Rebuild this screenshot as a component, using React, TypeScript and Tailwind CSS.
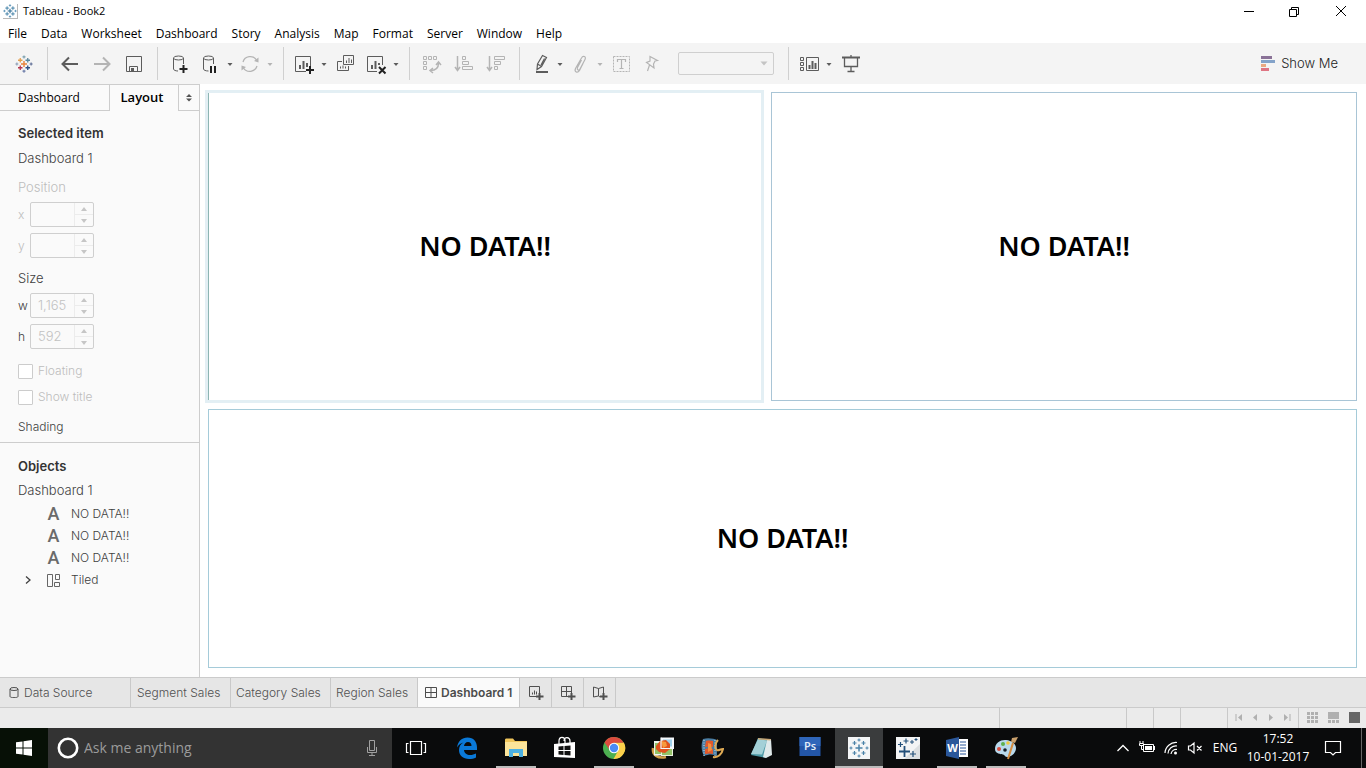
import React from 'react';
import { clsx } from 'clsx';

type IconProps = { children: React.ReactNode; size?: number; className?: string };

function Icon({ children, size = 22, className }: IconProps) {
  return (
    <svg
      width={size}
      height={size}
      viewBox={`0 0 ${size} ${size}`}
      fill="none"
      stroke="currentColor"
      className={clsx('block shrink-0', className)}
      aria-hidden="true"
    >
      {children}
    </svg>
  );
}

interface MarkProps {
  size: number;
  center: string;
  corners: string[];
  sides: string[];
}

// x, y of each small cross around the center one
const cornerSpots = [[7, 7], [17, 7], [7, 17], [17, 17]];
const sideSpots = [[12, 2.5], [21.5, 12], [12, 21.5], [2.5, 12]];

function TableauMark({ size, center, corners, sides }: MarkProps) {
  return (
    <svg width={size} height={size} viewBox="0 0 24 24" fill="none" className="block shrink-0" aria-hidden="true">
      <path d="M12 8v8M8 12h8" stroke={center} strokeWidth="1.9" />
      {cornerSpots.map(([x, y], i) => (
        <path key={i} d={`M${x} ${y - 3}v6M${x - 3} ${y}h6`} stroke={corners[i]} strokeWidth="1.7" />
      ))}
      {sideSpots.map(([x, y], i) => (
        <path key={i} d={`M${x} ${y - 2}v4M${x - 2} ${y}h4`} stroke={sides[i]} strokeWidth="1.5" />
      ))}
    </svg>
  );
}

const blues = ['#4583a8', '#4583a8', '#4583a8', '#4583a8'];
const paleBlues = ['#5e95b8', '#5e95b8', '#5e95b8', '#5e95b8'];

const menus = ['File', 'Data', 'Worksheet', 'Dashboard', 'Story', 'Analysis', 'Map', 'Format', 'Server', 'Window', 'Help'];

function TitleBar() {
  return (
    <header className="flex h-[23px] items-center bg-white pl-[3px] font-['Open_Sans',sans-serif] text-black">
      <span className="border-r border-b border-[#b8b8b8]">
        <TableauMark size={14} center="#2f6f98" corners={blues} sides={paleBlues} />
      </span>
      <h1 className="ml-[5px] text-[11px]">Tableau - Book2</h1>
      <div className="ml-auto flex items-center">
        <button aria-label="Minimize" className="flex w-[46px] justify-center">
          <Icon size={12}><path d="M1 5.500h10" /></Icon>
        </button>
        <button aria-label="Restore" className="flex w-[46px] justify-center">
          <Icon size={12}><path d="M.5 3.500h7v7h-7zM2.500 3.500v-2h7v7h-2" /></Icon>
        </button>
        <button aria-label="Close" className="mr-0.5 flex w-[46px] justify-center">
          <Icon size={12}><path d="M1 0l10 10M11 0L1 10" /></Icon>
        </button>
      </div>
    </header>
  );
}

function MenuBar() {
  return (
    <nav className="flex h-5 items-center gap-3.5 bg-white pt-px pl-2 font-['Open_Sans',sans-serif] text-xs text-black">
      {menus.map((menu) => (
        <button key={menu}>{menu}</button>
      ))}
    </nav>
  );
}

interface ToolProps {
  label: string;
  wide?: boolean;
  dim?: boolean;
  children: React.ReactNode;
}

function Tool({ label, wide, dim, children }: ToolProps) {
  return (
    <button
      aria-label={label}
      disabled={dim}
      className={clsx('flex h-8 shrink-0 items-center justify-center', wide ? 'w-8' : 'w-7', dim ? 'text-[#b4b4b4]' : 'text-[#5c5c5c]')}
    >
      <Icon>{children}</Icon>
    </button>
  );
}

function Caret({ label, dim }: { label: string; dim?: boolean }) {
  return (
    <button aria-label={label} disabled={dim} className={clsx('flex h-8 w-3 shrink-0 items-center justify-center', dim ? 'text-[#b4b4b4]' : 'text-[#5c5c5c]')}>
      <Icon size={6}><path d="M.5 2h5L3 5z" fill="currentColor" stroke="none" /></Icon>
    </button>
  );
}

function ToolGroup({ children }: { children: React.ReactNode }) {
  return <div className="my-1 flex items-center border-l border-[#d0d0d0] pr-[7px] pl-1.5">{children}</div>;
}

function Toolbar() {
  return (
    <div className="flex h-[41px] items-stretch bg-[#f4f4f4]">
      <button aria-label="Start page" className="flex w-[47px] items-center justify-center">
        <TableauMark
          size={18}
          center="#e8833a"
          corners={['#e3a04f', '#5b879c', '#b5364e', '#2c4d80']}
          sides={['#7ba0ae', '#5d6d95', '#6c7ca8', '#8c9db5']}
        />
      </button>
      <ToolGroup>
        <Tool label="Undo" wide>
          <path d="M3.500 11H19M10 4.500L3.500 11l6.500 6.500" strokeWidth="2" />
        </Tool>
        <Tool label="Redo" wide dim>
          <path d="M3 11h15.500M12 4.500l6.500 6.500-6.500 6.500" strokeWidth="2" />
        </Tool>
        <Tool label="Save" wide>
          <path d="M3.500 3.500h15v15h-15zM6.500 18.500v-5h8v5" />
          <path d="M8 15h3v3.500H8z" fill="currentColor" stroke="none" />
        </Tool>
      </ToolGroup>
      <ToolGroup>
        <Tool label="New data source" wide>
          <ellipse cx="9.500" cy="5" rx="5" ry="2" />
          <path d="M4.500 5v11c0 1 2 2 4.500 2M14.500 5v6" />
          <path d="M14.500 12v8M10.500 16h8" stroke="#222" strokeWidth="2" />
        </Tool>
        <Tool label="Pause auto updates">
          <ellipse cx="9.500" cy="5" rx="5" ry="2" />
          <path d="M4.500 5v11c0 1 2 2 5 2M14.500 5v6" />
          <path d="M12 13v7M16 13v7" stroke="#222" strokeWidth="2" />
        </Tool>
        <Caret label="Auto update options" />
        <Tool label="Run update" dim>
          <path d="M4 9a7.500 7.500 0 0 1 13.500-2M18 13a7.500 7.500 0 0 1-13.500 2" strokeWidth="1.300" />
          <path d="M19.500 4.500v5l-4.500-1.500zM2.500 17.500v-5l4.500 1.500z" fill="currentColor" stroke="none" />
        </Tool>
        <Caret label="Update options" dim />
      </ToolGroup>
      <ToolGroup>
        <Tool label="New worksheet">
          <path d="M13 18.500H2.500v-15h15V13" />
          <path d="M7 16v-4M10.500 16V8M14 14v-4" strokeWidth="2" />
          <path d="M17 13v8M13 17h8" stroke="#222" strokeWidth="2" />
        </Tool>
        <Caret label="New sheet options" />
        <Tool label="Duplicate" wide>
          <path d="M8.500 2.500h10v9h-10zM7 8.500H2.500v9h11V13" />
          <path d="M11.500 10V7.500M14 10V5M16.500 10V6.500M5.500 15.500v-2M8 15.500v-3M10.500 15.500v-2" />
        </Tool>
        <Tool label="Clear sheet">
          <path d="M12 18.500H2.500v-15h15V12" />
          <path d="M7 16v-4M10.500 16V8M14 12v-2" strokeWidth="2" />
          <path d="M14 14l6.500 6.500M20.500 14L14 20.500" stroke="#222" strokeWidth="2" />
        </Tool>
        <Caret label="Clear options" />
      </ToolGroup>
      <ToolGroup>
        <Tool label="Swap rows and columns" wide dim>
          <path d="M2.500 3.500h3v3h-3zM7.500 3.500h3v3h-3zM12.500 3.500h3v3h-3zM2.500 8.500h3v3h-3zM2.500 13.500h3v3h-3z" />
          <path d="M17.500 10c0 5-3 7.500-8 7.500M15 12l2.500-3 2.500 3M12 15l-3 2.500 3 2.500" strokeWidth="1.500" />
        </Tool>
        <Tool label="Sort ascending" wide dim>
          <path d="M4.500 3v14M2 14l2.500 3.500L7 14" strokeWidth="1.500" />
          <path d="M9.500 3.500h3v3h-3zM9.500 8.500h6v3h-6zM9.500 13.500h10v3h-10z" />
        </Tool>
        <Tool label="Sort descending" wide dim>
          <path d="M4.500 3v14M2 14l2.500 3.500L7 14" strokeWidth="1.500" />
          <path d="M9.500 3.500h10v3h-10zM9.500 8.500h6v3h-6zM9.500 13.500h3v3h-3z" />
        </Tool>
      </ToolGroup>
      <ToolGroup>
        <Tool label="Highlight">
          <path d="M8.500 11L13.500 2.500l4 2-5 9-4.500 3zM8.500 11l4 2.500M12 12l3.500-6.500" strokeWidth="1.200" />
          <path d="M7 19h12" strokeWidth="2" />
        </Tool>
        <Caret label="Highlight options" />
        <Tool label="Group" dim>
          <path d="M12.500 7l-4 7.500c-1 2.500 1.500 3.500 2.500 1.500l5-9.500c1.500-3-2-4.500-3.500-1.500l-6 10.500c-1.500 3.500 2 5 4 2l3.500-7" strokeWidth="1.200" />
        </Tool>
        <Caret label="Group options" dim />
        <Tool label="Show mark labels" wide dim>
          <path d="M2.500 3.500h16v15h-16z" strokeDasharray="2 1" />
          <path d="M6.500 9V6.500h8V9M10.500 6.500v9M8.500 15.500h4" strokeWidth="1.200" />
        </Tool>
        <Tool label="Fix axes" dim>
          <path d="M9 3.500l7.500 4-2.500.5-1.500 3 .5 4-7.500-5.500 3.500-1.500zM8.500 12L6.500 18" strokeWidth="1.200" />
        </Tool>
        <span className="relative ml-3 block h-[23px] w-24">
          <select disabled aria-label="Fit" className="block h-full w-full appearance-none rounded-[2px] border border-[#cfcfcf] bg-[#f4f4f4]" />
          <span className="pointer-events-none absolute top-2 right-1.5 text-[#c4c4c4]">
            <Icon size={8}><path d="M.5 1.500h7L4 5.500z" fill="currentColor" stroke="none" /></Icon>
          </span>
        </span>
        <span className="w-[7px]" />
      </ToolGroup>
      <ToolGroup>
        <Tool label="Show or hide cards">
          <path d="M2.500 4.500h3v3h-3zM2.500 9.500h3v3h-3zM2.500 14.500h3v3h-3zM8.500 4.500h12v13h-12z" />
          <path d="M11.500 16v-4M14.500 16V8M17.500 16v-6" strokeWidth="2" />
        </Tool>
        <Caret label="Card options" />
        <Tool label="Presentation mode" wide>
          <path d="M2 4.500h18" strokeWidth="2" />
          <path d="M4.500 5v8.500h13V5M11 2v2M11 13.500v5M7.500 18.500h7" strokeWidth="1.300" />
        </Tool>
      </ToolGroup>
      <button className="mr-7 ml-auto flex items-center gap-1.5 font-['Inter',sans-serif] text-[13px] font-light text-[#222]">
        <svg width="14" height="16" viewBox="0 0 14 16" className="block" aria-hidden="true">
          <path d="M0 0h11v3H0z" fill="#8a7297" />
          <path d="M0 4h14v3H0z" fill="#84a3c9" />
          <path d="M0 8h5v3H0z" fill="#eaa982" />
          <path d="M0 12h8v3H0z" fill="#df7583" />
        </svg>
        Show Me
      </button>
    </div>
  );
}

function Spinner({ id, label, value, dim }: { id: string; label: string; value: string; dim?: boolean }) {
  return (
    <div className="flex h-[25px] items-center">
      <label htmlFor={id} className={clsx('w-3 shrink-0 text-xs', dim && 'text-[#bdbdbd]')}>{label}</label>
      <div className="flex h-full w-16 rounded-[2px] border border-[#cfcfcf]">
        <input id={id} defaultValue={value} disabled className="w-11 min-w-0 border-r border-[#ececec] bg-transparent pl-[7px] text-[#c2c2c2]" />
        <div className="flex flex-1 flex-col text-[#c6c6c6]">
          <button disabled aria-label={`Increase ${label}`} className="flex flex-1 items-center justify-center border-b border-[#ececec]">
            <Icon size={6}><path d="M0 5h6L3 1z" fill="currentColor" stroke="none" /></Icon>
          </button>
          <button disabled aria-label={`Decrease ${label}`} className="flex flex-1 items-center justify-center">
            <Icon size={6}><path d="M0 1h6L3 5z" fill="currentColor" stroke="none" /></Icon>
          </button>
        </div>
      </div>
    </div>
  );
}

function CheckRow({ label }: { label: string }) {
  return (
    <label className="flex h-[26px] items-center gap-[5px] text-[#bdbdbd]">
      <input type="checkbox" disabled className="size-[15px] appearance-none rounded-[1px] border border-[#cccccc] bg-white" />
      {label}
    </label>
  );
}

function SidePanel() {
  return (
    <aside className="flex w-[200px] shrink-0 flex-col border-t border-r border-[#cdcdcd] bg-[#fafafa] font-['Inter',sans-serif] text-[13px] font-light text-[#404040]">
      <div className="flex h-[26px] font-['Open_Sans',sans-serif] text-black">
        <button className="w-[110px] border-r border-b border-[#cdcdcd] pl-[18px] text-left text-xs font-normal">Dashboard</button>
        <button className="flex-1 pr-1 text-center font-semibold">Layout</button>
        <button aria-label="Panel menu" className="flex w-[21px] items-center justify-center border-b border-l border-[#cdcdcd] text-[#555]">
          <Icon size={8}><path d="M1 3h6L4 0zM1 4.500h6l-3 3z" fill="currentColor" stroke="none" /></Icon>
        </button>
      </div>

      <section className="border-b border-[#cdcdcd] pt-[9px] pl-[18px]">
        <h2 className="flex h-[27px] items-center font-semibold text-[#333]">Selected item</h2>
        <p className="flex h-6 items-center">Dashboard 1</p>
        <h3 className="flex h-[31px] items-center pt-0.5 text-[#bdbdbd]">Position</h3>
        <div className="flex flex-col gap-1.5">
          <Spinner id="pos-x" label="x" value="" dim />
          <Spinner id="pos-y" label="y" value="" dim />
        </div>
        <h3 className="mt-1.5 flex h-[29px] items-center">Size</h3>
        <div className="flex flex-col gap-1.5">
          <Spinner id="size-w" label="w" value="1,165" />
          <Spinner id="size-h" label="h" value="592" />
        </div>
        <div className="mt-[9px] text-xs">
          <CheckRow label="Floating" />
          <CheckRow label="Show title" />
        </div>
        <h3 className="flex h-8 items-center pt-0.5 text-xs">Shading</h3>
      </section>

      <section className="pt-3">
        <h2 className="flex h-6 items-center pl-[18px] font-semibold text-[#333]">Objects</h2>
        <p className="flex h-6 items-center pl-[18px]">Dashboard 1</p>
        <ul className="text-xs">
          {[1, 2, 3].map((n) => (
            <li key={n} className="flex h-[22px] items-center pl-[46px]">
              <span className="w-[15px] text-center font-['Roboto',sans-serif] text-lg font-medium text-[#6a6a6a]">A</span>
              <span className="ml-2.5">NO DATA!!</span>
            </li>
          ))}
          <li className="flex h-[22px] items-center pl-6">
            <button aria-label="Expand Tiled">
              <Icon size={8}><path d="M2 .5L6 4 2 7.500" strokeWidth="1.300" /></Icon>
            </button>
            <Icon size={14} className="ml-[15px] text-[#666]">
              <path d="M.5 1.500h5v12h-5zM8.500 1.500h4v5h-4zM7.500 9.500h5v4h-5z" />
            </Icon>
            <span className="ml-2.5">Tiled</span>
          </li>
        </ul>
      </section>
    </aside>
  );
}

function Zone({ className }: { className: string }) {
  return (
    <div className={clsx("flex items-center justify-center font-['Noto_Sans',sans-serif] text-[27px] font-semibold text-black", className)}>
      NO DATA!!
    </div>
  );
}

function DashboardCanvas() {
  return (
    <main className="grid min-w-0 flex-1 grid-cols-[553fr_586fr] grid-rows-[309fr_259fr] gap-x-2.5 gap-y-2 bg-white pt-2 pr-[9px] pb-[9px] pl-2">
      <Zone className="my-px border-l border-[#8db5b3] ring-3 ring-[#e3eff4]" />
      <Zone className="border border-[#a9c5d6]" />
      <Zone className="col-span-2 border border-[#a5cbd9]" />
    </main>
  );
}

function SheetTabs() {
  const tab = 'flex items-center border-r border-[#c9c9c9]';
  return (
    <div className="flex h-[31px] border-y border-[#cbcbcb] bg-[#e6e6e6] font-['Inter',sans-serif] text-xs font-light text-[#505050]">
      <button className={clsx(tab, 'w-[131px] gap-[5px] pl-2')}>
        <Icon size={11}>
          <ellipse cx="6" cy="2" rx="4" ry="1.500" />
          <path d="M2 2v7.500c0 1.500 8 1.500 8 0V2" />
        </Icon>
        Data Source
      </button>
      <button className={clsx(tab, 'w-[100px] pl-1.5')}>Segment Sales</button>
      <button className={clsx(tab, 'w-[100px] pl-[5px]')}>Category Sales</button>
      <button className={clsx(tab, 'w-[87px] pl-[5px]')}>Region Sales</button>
      <button className={clsx(tab, 'w-[102px] gap-1 bg-[#fafafa] pl-[7px] font-semibold whitespace-nowrap text-[#4c4c4c]')}>
        <Icon size={12}><path d="M.5.500h11v10H.5zM6 .5v10M.5 5.500h11" /></Icon>
        Dashboard 1
      </button>
      <button aria-label="New worksheet" className={clsx(tab, 'w-8 justify-center')}>
        <Icon size={16}>
          <path d="M9 11.500H1.500v-10h10V8M4.500 9.500v-2M6.500 9.500v-4M8.500 9.500v-3" />
          <path d="M11.500 8v7M8 11.500h7.500" strokeWidth="2" />
        </Icon>
      </button>
      <button aria-label="New dashboard" className={clsx(tab, 'w-8 justify-center')}>
        <Icon size={16}>
          <path d="M8 11.500H1.500v-10h10V8M6.500 1.500v10M1.500 6.500h10" />
          <path d="M11.500 8v7M8 11.500h7.500" strokeWidth="2" />
        </Icon>
      </button>
      <button aria-label="New story" className={clsx(tab, 'w-8 justify-center')}>
        <Icon size={16}>
          <path d="M8 12l-1.500-1-5 1V2l5 1.500L11.500 2v6M6.500 3.500V11" />
          <path d="M11.500 8v7M8 11.500h7.500" strokeWidth="2" />
        </Icon>
      </button>
    </div>
  );
}

const pagers = [
  { label: 'First sheet', d: 'M1.500 0v7h-1V0zM7 0v7L3 3.500z' },
  { label: 'Previous sheet', d: 'M6 0v7L2 3.500z' },
  { label: 'Next sheet', d: 'M2 0v7l4-3.500z' },
  { label: 'Last sheet', d: 'M1 0v7l4-3.500zM6.500 0v7h1V0z' },
];

function StatusBar() {
  return (
    <div className="flex h-5 justify-end bg-[#ebebeb] text-[#b0b0b0]">
      <span className="w-[127px] border-l border-[#c9c9c9]" />
      <span className="w-[27px] border-l border-[#c9c9c9]" />
      <span className="w-[27px] border-l border-[#c9c9c9]" />
      <span className="w-[47px] border-l border-[#c9c9c9]" />
      <div className="flex w-[71px] items-center gap-2 border-l border-[#c9c9c9] pb-px pl-[7px]">
        {pagers.map((p) => (
          <button key={p.label} aria-label={p.label} disabled>
            <Icon size={8}><path d={p.d} fill="currentColor" stroke="none" /></Icon>
          </button>
        ))}
      </div>
      <div className="flex w-[68px] items-center gap-2.5 border-l border-[#c9c9c9] pb-px pl-2">
        <button aria-label="Show sheet sorter">
          <Icon size={11}><path d="M0 1.500h11M0 5.500h11M0 9.500h11" strokeWidth="3" strokeDasharray="3 1" /></Icon>
        </button>
        <button aria-label="Show filmstrip">
          <Icon size={11}>
            <path d="M0 3.500h11" strokeWidth="7" />
            <path d="M0 9.500h11" strokeWidth="3" strokeDasharray="3 1" />
          </Icon>
        </button>
        <button aria-label="Show tabs" className="text-[#666]">
          <Icon size={11}><path d="M0 0h11v11H0z" fill="currentColor" stroke="none" /></Icon>
        </button>
      </div>
    </div>
  );
}

interface TaskAppProps {
  label: string;
  open?: boolean;
  active?: boolean;
  children: React.ReactNode;
}

function TaskApp({ label, open, active, children }: TaskAppProps) {
  return (
    <button aria-label={label} className={clsx('flex w-12 shrink-0 flex-col items-center', active && 'bg-[#3a3c3d]')}>
      <span className="flex flex-1 items-center">
        <svg width="24" height="24" viewBox="0 0 24 24" className="block" aria-hidden="true">{children}</svg>
      </span>
      <span className={clsx('-mt-0.5 h-0.5', active ? 'w-full' : 'w-10', open && 'bg-[#bcbcbc]')} />
    </button>
  );
}

function TaskApps() {
  return (
    <div className="ml-[3px] flex gap-px">
      <TaskApp label="Microsoft Edge">
        <path d="M2 11.500C3 5 7 1.500 12.500 1.500c6 0 9.500 4 9.500 10V14H9c.3 3.500 3 5 6 5 2.300 0 4.300-.6 6-1.500v4c-2 1-4.300 1.500-7 1.500-6 0-10-3.500-10-9 0-3.200 1.600-6 4.500-7.500C5.500 7 3.500 9 2 11.500zM9 10h7.500c0-2.500-1.300-4-3.500-4S9.300 7.700 9 10z" fill="#0a79d8" />
      </TaskApp>
      <TaskApp label="File Explorer" open>
        <path d="M1 4c0-1 .5-1.500 1.500-1.500H9L11 5h12v15H1z" fill="#f0c65c" />
        <path d="M1 6h22v14H1z" fill="#fbe49a" />
        <path d="M5 21v-8h14v8h-4v-4H9v4z" fill="#4db1e2" />
      </TaskApp>
      <TaskApp label="Store">
        <path d="M1 8l21-2v16l-21-1z" fill="#fff" />
        <path d="M6 8V5c0-5 6-4.500 6-.5V7M11 5c0-5 6-4 6 0v2" fill="none" stroke="#fff" strokeWidth="1.200" />
        <path d="M5.500 10.500l5-.5v4h-5zM11.500 10l6-.6V14h-6zM5.500 15h5v4l-5-.5zM11.500 15h6v4.500l-6-.4z" fill="#111" />
      </TaskApp>
      <TaskApp label="Google Chrome" open>
        <circle cx="12" cy="12" r="11" fill="#4caf50" />
        <path d="M12 6.500h9.800A11 11 0 0 1 11.500 23l5-9z" fill="#fcd04b" />
        <path d="M2.500 6.500A11 11 0 0 1 21.600 6.800H12v2L7 13z" fill="#dd4b3e" />
        <circle cx="12" cy="12" r="5.200" fill="#fff" />
        <circle cx="12" cy="12" r="4.200" fill="#4a8af4" />
      </TaskApp>
      <TaskApp label="Photo Gallery">
        <path d="M2 12c-1 7 5 11 13 9" fill="none" stroke="#d3a04a" strokeWidth="2.500" />
        <path d="M3 5h10v14H3z" fill="#eef5ea" />
        <path d="M4 7h9v11H4z" fill="#93c268" />
        <path d="M10 12h12v8H10z" fill="#e9f1df" />
        <path d="M11 12h10v7H11z" fill="#93c268" />
        <path d="M10 1.500h13v11H10z" fill="#f4f8fc" />
        <path d="M12 3.500h9v7h-9z" fill="#9ed0ec" />
        <path d="M5 10l4-5 6-1 4 4v5l-5 4-6-1-3-3z" fill="#e0521e" />
        <path d="M10 5l5 1 1 4-4 2z" fill="#f79a3d" />
        <path d="M10 1.500v11h13M3 19h7" fill="none" stroke="#f4f8fc" strokeWidth="1.200" />
      </TaskApp>
      <TaskApp label="Movie Maker">
        <path d="M3 3c6-1.500 11 0 14 1v16c-4-2-8-2-13 0-3-6-3-12-1-17z" fill="#4b7da3" />
        <path d="M6 5c3-.8 5-.5 7 0v6c-3-.5-5-.5-8 0zM5 13c3-.6 5-.5 8 0v5c-3-.8-5-.6-8 0z" fill="#e2592b" />
        <path d="M8 7l3 1 1 6-4 2z" fill="#f6913c" />
        <path d="M4 4v16M15 4v16" stroke="#cfe0ea" strokeWidth="1" strokeDasharray="1 1.500" />
        <path d="M18 4c-4 4-3 9-1 10 2 .8 3-1 6-1-1 5-5 9-10 8" fill="none" stroke="#e0ab55" strokeWidth="2" />
      </TaskApp>
      <TaskApp label="Notepad">
        <path d="M9 2l12 2-4 18-15-3z" fill="#4c98a6" />
        <path d="M9 3l9 1.500-5 14L2 18z" fill="#a3d0d7" />
        <path d="M18 4l4-1 1 16-6 3-3-1z" fill="#dfe9ea" />
        <path d="M9 2l13 1-.5 1.500L9 3.500z" fill="#c9a877" />
      </TaskApp>
      <TaskApp label="Photoshop">
        <path d="M1.500 1h21v19h-21z" fill="#2356a8" />
        <path d="M1.500 1h21v9h-21z" fill="#2f66ba" />
        <text x="12" y="14" textAnchor="middle" fontSize="11" fontWeight="600" fontFamily="Open Sans, sans-serif" fill="#e6f0fb">Ps</text>
      </TaskApp>
      <TaskApp label="Tableau" active open>
        <path d="M1 1h22v22H1z" fill="#f4f6f7" />
        <g fill="none" stroke="#4a82a8">
          <path d="M12 8.500v7M8.500 12h7" strokeWidth="1.500" />
          <path d="M7.500 5v4M5.500 7h4M16.500 5v4M14.500 7h4M7.500 15v4M5.500 17h4M16.500 15v4M14.500 17h4" strokeWidth="1.200" />
          <path d="M12 2.500v3M10.500 4h3M12 18.500v3M10.500 20h3M4 10.500v3M2.500 12h3M20 10.500v3M18.500 12h3" />
        </g>
      </TaskApp>
      <TaskApp label="Tableau Reader">
        <path d="M0 1h24v22H0z" fill="#f3f4f5" />
        <path d="M24 8v15H8z" fill="#dcdfe1" />
        <g fill="none" stroke="#24507a">
          <path d="M8.500 10v11M3 15.500h11" strokeWidth="1.800" />
          <path d="M10 2.500v5M7.500 5h5M4.500 6v5M2 8.500h5M17 15v6M14 18h6" strokeWidth="1.200" />
          <path d="M16 4v4M14 6h4M20 2v3M18.500 3.500h3" />
        </g>
      </TaskApp>
      <TaskApp label="Word" open>
        <path d="M11 3h12v18H11z" fill="#fff" />
        <path d="M15 6h6M15 9h6M15 12h6M15 15h6M15 18h6" stroke="#2b579a" />
        <path d="M1 4l13-3v22L1 20z" fill="#2b579a" />
        <text x="7.500" y="16" textAnchor="middle" fontSize="11" fontWeight="700" fontFamily="Open Sans, sans-serif" fill="#fff">W</text>
      </TaskApp>
      <TaskApp label="Paint" open>
        <path d="M1 13C1 7 6 3.500 12 4c6 .5 10 4 10 8s-3 8-8 9c-3 .5-3-2-5-2.500S1 18 1 13z" fill="#b9d9ec" />
        <circle cx="5" cy="13" r="2" fill="#d84c3e" />
        <circle cx="9" cy="8" r="2" fill="#5eb04d" />
        <circle cx="14" cy="7" r="1.800" fill="#f0c93e" />
        <circle cx="11" cy="14" r="1.800" fill="#15202a" />
        <path d="M14 23l5-16" stroke="#d58c3f" strokeWidth="2" />
        <path d="M17 6l1-4 6-1-3 6z" fill="#c9a06c" />
      </TaskApp>
    </div>
  );
}

function Taskbar() {
  return (
    <footer className="flex h-10 bg-[#0a0b0c] font-['Open_Sans',sans-serif] text-xs text-white">
      <button aria-label="Start" className="flex w-12 items-center justify-center bg-[#071006]">
        <Icon size={16}>
          <path d="M0 2.300L6.500 1.400V7.500H0zM7.500 1.200L16 0v7.500H7.500zM0 8.500h6.500v6.100L0 13.700zM7.500 8.500H16V16l-8.500-1.200z" fill="#fff" stroke="none" />
        </Icon>
      </button>
      <div className="flex w-[344px] items-center bg-[#333] pr-3 pl-2">
        <Icon size={24}><circle cx="12" cy="12" r="9.200" stroke="#fff" strokeWidth="2.600" /></Icon>
        <input aria-label="Search" placeholder="Ask me anything" className="ml-1 min-w-0 flex-1 bg-transparent text-sm text-white placeholder:text-[#9b9b9b]" />
        <button aria-label="Speak" className="text-[#a0a0a0]">
          <Icon size={16}><path d="M5.500.5h5v10h-5zM3.500 7v5.500h9V7M8 12.500v3M5 15.500h6" /></Icon>
        </button>
      </div>
      <button aria-label="Task view" className="flex w-12 items-center justify-center">
        <Icon size={22}><path d="M5.500 4.500h11v13h-11zM3.500 6.500h-2v9h2M18.500 6.500h2v9h-2" strokeWidth="1.200" /></Icon>
      </button>
      <TaskApps />
      <div className="ml-auto flex items-center">
        <button aria-label="Hidden icons" className="flex w-6 justify-center">
          <Icon size={14}><path d="M1.500 10L7 4.500 12.500 10" strokeWidth="1.300" /></Icon>
        </button>
        <button aria-label="Battery" className="flex w-6 justify-center">
          <Icon size={18}>
            <path d="M5.500 5.500h10v7h-10zM16.500 7v4" />
            <path d="M7 7h7v4H7z" fill="currentColor" stroke="none" />
            <path d="M2 2v2M5 2v2M1.500 4.500h4v2h-4zM3.500 7v3.500h2" />
          </Icon>
        </button>
        <button aria-label="Network" className="flex w-6 justify-center">
          <Icon size={16}>
            <path d="M2 13A11 11 0 0 1 14 2.500M5 13.500a8 8 0 0 1 9-7.500M8 14a5.500 5.500 0 0 1 6-4.500" strokeWidth="1.200" />
            <circle cx="12.500" cy="13" r="1.500" fill="currentColor" stroke="none" />
          </Icon>
        </button>
        <button aria-label="Volume" className="flex w-6 justify-center">
          <Icon size={16}><path d="M1.500 6h2L7 3v10l-3.500-3h-2zM10 6l4.500 4.500M14.500 6L10 10.500" strokeWidth="1.200" /></Icon>
        </button>
        <button className="w-9">ENG</button>
        <button className="flex w-[70px] flex-col items-center leading-[18px]">
          <span>17:52</span>
          <span>10-01-2017</span>
        </button>
        <button aria-label="Notifications" className="mr-2 flex w-10 justify-center">
          <Icon size={18}><path d="M1.500 2.500h15v11h-5L9 16l-2.500-2.500h-5z" strokeWidth="1.200" /></Icon>
        </button>
        <button aria-label="Show desktop" className="h-10 w-[5px] border-l border-[#666]" />
      </div>
    </footer>
  );
}

export default function App() {
  return (
    <div className="flex min-h-screen flex-col bg-white">
      <TitleBar />
      <MenuBar />
      <Toolbar />
      <div className="flex flex-1">
        <SidePanel />
        <DashboardCanvas />
      </div>
      <SheetTabs />
      <StatusBar />
      <Taskbar />
    </div>
  );
}
